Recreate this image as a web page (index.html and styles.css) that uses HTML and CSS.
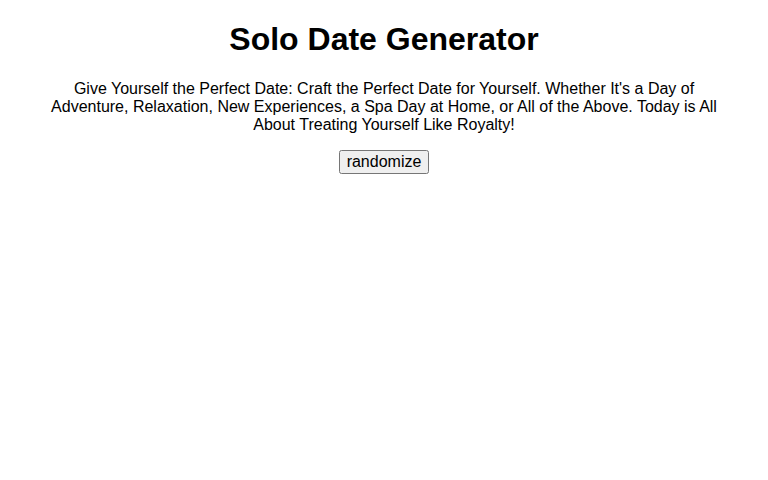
FILE: index.html
```html
<!DOCTYPE html>
<html>
<head>
    <title>Solo Date Generator</title>
    <link rel="stylesheet" href="styles.css">
</head>
<body>
    <div class="container">
        <h1>Solo Date Generator</h1>
        <p class="intro">Give Yourself the Perfect Date: Craft the Perfect Date for Yourself. Whether It's a Day of Adventure, Relaxation, New Experiences, a Spa Day at Home, or All of the Above. Today is All About Treating Yourself Like Royalty!</p>
        <button class="randomize-button">randomize</button>
        <div class="result" id="result"></div>
    </div>
</body>
</html>
```

FILE: styles.css
```css
body {
    font-family: "Liberation Sans", Arial, sans-serif;
    margin: 0 8px;
    background-color: #fff;
    color: #000;
}

.container {
    text-align: center;
}

h1 {
    font-size: 32px;
    margin: 21px 0 22px;
}

.intro {
    max-width: 700px;
    margin: 0 auto 16px;
    font-size: 16px;
}

.randomize-button {
    font-family: "Liberation Sans", Arial, sans-serif;
    font-size: 16px;
}
```
